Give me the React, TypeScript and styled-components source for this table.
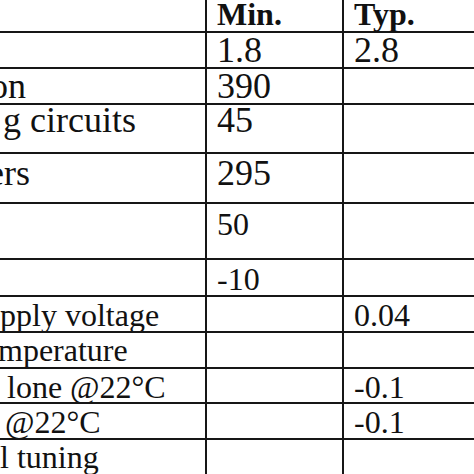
import { createGlobalStyle, styled } from "styled-components";

const GlobalStyle = createGlobalStyle`
  html, body {
    margin: 0;
    padding: 0;
    background: #fff;
    overflow: hidden;
  }
  body {
    font-family: "Liberation Serif", "Times New Roman", serif;
    color: #111;
  }
`;

interface SpecRow {
  label: string;
  shift: number;
  min: string;
  typ: string;
  h: number;
  size: number;
  base: number;
}

const rows: SpecRow[] = [
  { label: "", shift: 0, min: "1.8", typ: "2.8", h: 34, size: 36, base: 26 },
  { label: "on", shift: -10, min: "390", typ: "", h: 34, size: 36, base: 26 },
  { label: "g circuits", shift: 3, min: "45", typ: "", h: 47, size: 36, base: 24 },
  { label: "ers", shift: -12, min: "295", typ: "", h: 48, size: 36, base: 28 },
  { label: "", shift: 0, min: "50", typ: "", h: 54, size: 32, base: 28 },
  { label: "", shift: 0, min: "-10", typ: "", h: 35, size: 32, base: 27 },
  { label: "pply voltage", shift: 0, min: "", typ: "0.04", h: 34, size: 32, base: 26 },
  { label: "mperature", shift: -2, min: "", typ: "", h: 34, size: 32, base: 25 },
  { label: "lone @22°C", shift: 7, min: "", typ: "-0.1", h: 33, size: 32, base: 26 },
  { label: "@22°C", shift: 5, min: "", typ: "-0.1", h: 34, size: 32, base: 26 },
  { label: "l tuning", shift: 0, min: "", typ: "", h: 34, size: 32, base: 25 },
];

export default function App() {
  return (
    <>
      <GlobalStyle />
      <Table>
        <Row $h={31} $size={32} $base={21}>
          <Label $shift={0} />
          <Value $divider $bold>Min.</Value>
          <Value $divider $bold>Typ.</Value>
        </Row>
        {rows.map((r, i) => (
          <Row key={i} $h={r.h} $size={r.size} $base={r.base}>
            <Label $shift={r.shift}>{r.label}</Label>
            <Value $divider>{r.min}</Value>
            <Value $divider>{r.typ}</Value>
          </Row>
        ))}
      </Table>
    </>
  );
}

const Table = styled.div`
  width: 474px;
  display: flex;
  flex-direction: column;
`;

// a 28px line box puts the baseline roughly 11 + 0.3375em from its top
const Row = styled.div<{ $h: number; $size: number; $base: number }>`
  display: grid;
  grid-template-columns: 205px 137px 1fr;
  height: ${(p) => p.$h}px;
  border-bottom: 2px solid #161616;
  font-size: ${(p) => p.$size}px;
  line-height: 28px;

  & > div {
    padding-top: ${(p) => Math.max(0, Math.round(p.$base - (11 + 0.3375 * p.$size)))}px;
  }
`;

const Label = styled.div<{ $shift: number }>`
  overflow: hidden;
  white-space: pre;
  text-indent: ${(p) => p.$shift}px;
`;

const Value = styled.div<{ $divider?: boolean; $bold?: boolean }>`
  box-sizing: border-box;
  padding-left: 10px;
  white-space: nowrap;
  border-left: ${(p) => (p.$divider ? "2px solid #161616" : "none")};
  font-weight: ${(p) => (p.$bold ? 700 : 400)};
`;
